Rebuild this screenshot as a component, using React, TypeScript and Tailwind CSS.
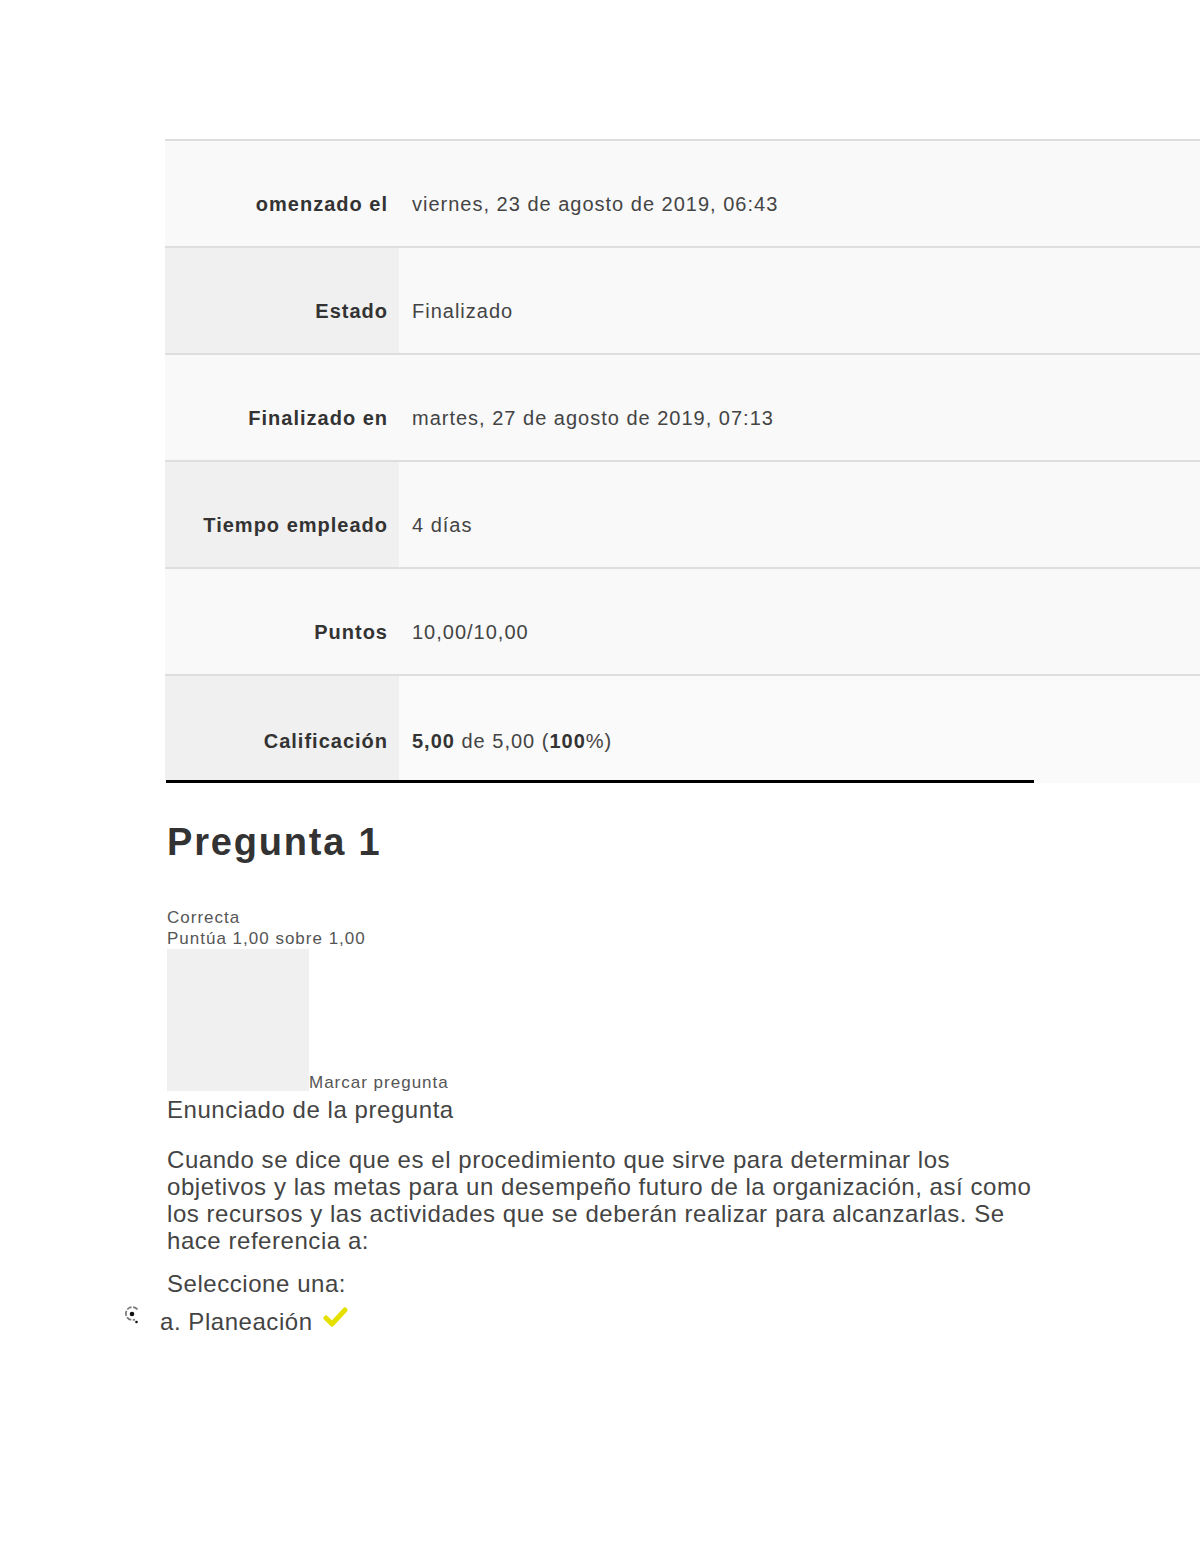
const font = { fontFamily: '"Liberation Sans", Arial, sans-serif' };

interface Row {
  label: string;
  value: React.ReactNode;
  shaded: boolean;
}

const rows: Row[] = [
  { label: "omenzado el", value: "viernes, 23 de agosto de 2019, 06:43", shaded: false },
  { label: "Estado", value: "Finalizado", shaded: true },
  { label: "Finalizado en", value: "martes, 27 de agosto de 2019, 07:13", shaded: false },
  { label: "Tiempo empleado", value: "4 días", shaded: true },
  { label: "Puntos", value: "10,00/10,00", shaded: false },
];

function SummaryRow({ row }: { row: Row }) {
  return (
    <div className="flex h-[107px] border-b-2 border-[#dedede]">
      <div
        className={`w-[234px] shrink-0 pt-[51px] pr-[11px] text-right text-[20px] leading-[24px] font-bold tracking-[1px] text-[#333] ${
          row.shaded ? "bg-[#f0f0f0]" : "bg-[#f9f9f9]"
        }`}
      >
        {row.label}
      </div>
      <div className="flex-1 bg-[#f9f9f9] pt-[51px] pl-[13px] text-[20px] leading-[24px] tracking-[1px] text-[#444]">
        {row.value}
      </div>
    </div>
  );
}

function RadioMark() {
  return (
    <svg width="16" height="20" viewBox="0 0 16 20" className="shrink-0">
      <path d="M12.5 3.5 A6.5 6.5 0 1 0 10 13.5" fill="none" stroke="#777" strokeWidth="1.7" strokeDasharray="5 1.5" />
      <circle cx="7" cy="8" r="2.3" fill="#111" />
      <circle cx="11.5" cy="16" r="1.3" fill="#111" />
    </svg>
  );
}

function CheckMark() {
  return (
    <svg width="26" height="22" viewBox="0 0 26 22" className="shrink-0">
      <path d="M3 12 L9 18 L22 4" fill="none" stroke="#e6e000" strokeWidth="5" strokeLinecap="round" strokeLinejoin="round" />
    </svg>
  );
}

export default function App() {
  return (
    <div className="w-[1200px] min-h-[1553px] bg-white overflow-hidden" style={font}>
      <div className="pt-[139px] pl-[165px]">
        {/* attempt summary table */}
        <div className="w-[1035px] border-t-2 border-[#dedede]">
          {rows.map((r) => (
            <SummaryRow key={r.label} row={r} />
          ))}
          <div className="flex h-[104px]">
            <div className="w-[234px] shrink-0 bg-[#f0f0f0] pt-[53px] pr-[11px] text-right text-[20px] leading-[24px] font-bold tracking-[1px] text-[#333]">
              Calificación
            </div>
            <div className="flex-1 bg-[#fafafa] pt-[53px] pl-[13px] text-[20px] leading-[24px] tracking-[1px] text-[#444]">
              <span className="font-bold text-[#333]">5,00</span> de 5,00 (<span className="font-bold text-[#333]">100</span>%)
            </div>
          </div>
          <div className="flex h-[3px]">
            <div className="w-[868px] ml-px bg-black" />
            <div className="flex-1 bg-[#fafafa]" />
          </div>
        </div>

        {/* question */}
        <div className="w-[870px] pl-[2px]">
          <h2 className="mt-[35px] text-[38px] leading-[48px] font-bold tracking-[1.8px] text-[#333]">Pregunta 1</h2>

          <div className="mt-[41px] text-[17px] leading-[21px] tracking-[1px] text-[#555]">
            <div>Correcta</div>
            <div>Puntúa 1,00 sobre 1,00</div>
          </div>

          <div className="flex items-end">
            <div className="w-[142px] h-[142px] bg-[#f0f0f0]" />
            <span className="text-[17px] leading-[17px] tracking-[1px] text-[#555]">Marcar pregunta</span>
          </div>

          <div className="mt-[5px] text-[24px] leading-[27px] tracking-[0.55px] text-[#444]">Enunciado de la pregunta</div>

          <p className="mt-[23px] text-[24px] leading-[27px] tracking-[0.55px] text-[#444]">
            Cuando se dice que es el procedimiento que sirve para determinar los objetivos y las metas para un
            desempeño futuro de la organización, así como los recursos y las actividades que se deberán realizar para
            alcanzarlas. Se hace referencia a:
          </p>

          <div className="mt-[16px] text-[24px] leading-[27px] tracking-[0.55px] text-[#444]">Seleccione una:</div>

          <div className="mt-[11px] -ml-[42px] flex items-start">
            <span className="-mt-[2px]">
              <RadioMark />
            </span>
            <span className="ml-[19px] text-[24px] leading-[27px] tracking-[0.55px] text-[#444]">a. Planeación</span>
            <span className="ml-[10px] -mt-[2px]">
              <CheckMark />
            </span>
          </div>
        </div>
      </div>
    </div>
  );
}
